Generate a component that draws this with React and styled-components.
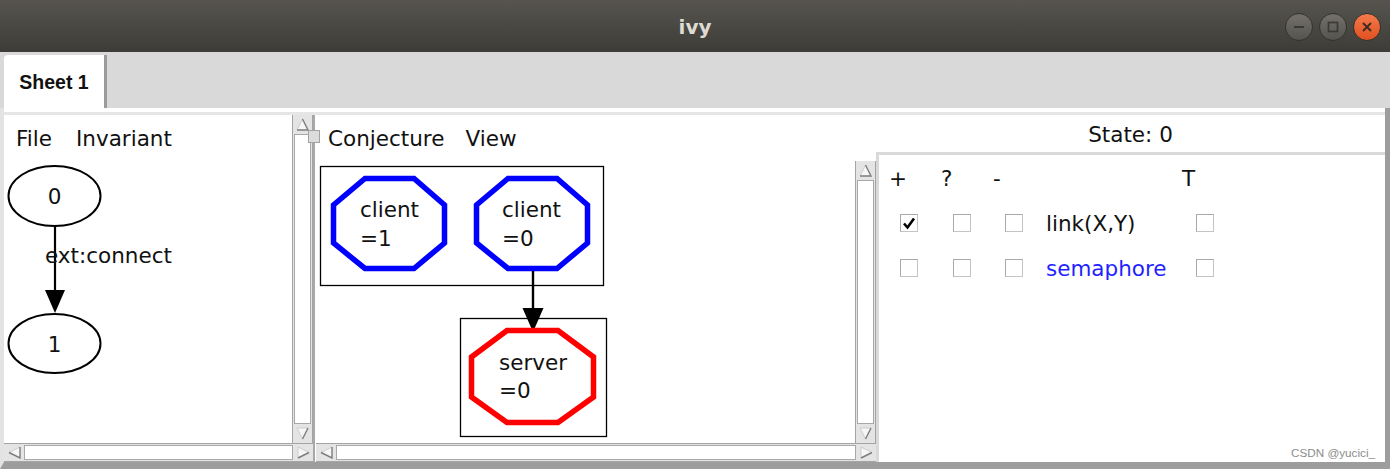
import React from "react";
import styled, { createGlobalStyle } from "styled-components";

const TK_FONT = `"DejaVu Sans", "Noto Sans", sans-serif`;

const GlobalStyle = createGlobalStyle`
  html, body {
    margin: 0;
    padding: 0;
    background: #fff;
  }
  body {
    font-family: ${TK_FONT};
  }
  * {
    box-sizing: border-box;
  }
`;

const Window = styled.div`
  width: 1390px;
  height: 469px;
  display: flex;
  flex-direction: column;
  overflow: hidden;
  background: #fff;
`;

const TitleBar = styled.div`
  height: 52px;
  flex: none;
  display: grid;
  grid-template-columns: 1fr auto 1fr;
  align-items: center;
  padding: 0 9px;
  background: linear-gradient(#57544e, #3d3c38);
`;

const Title = styled.div`
  grid-column: 2;
  font: bold 20px ${TK_FONT};
  color: #dfdbd2;
  margin-top: 1px;
`;

const WinButtons = styled.div`
  grid-column: 3;
  justify-self: end;
  display: flex;
  gap: 6px;
  margin-top: 2px;
`;

const WinButton = styled.div`
  width: 28px;
  height: 28px;
  border-radius: 50%;
  display: flex;
  align-items: center;
  justify-content: center;
  border: 1px solid #34332f;
  background: ${(p) =>
    p.$close
      ? "linear-gradient(#f47a4c, #e0501e)"
      : "linear-gradient(#74716b, #55534e)"};
`;

const TabBar = styled.div`
  height: 56px;
  flex: none;
  display: flex;
  align-items: flex-end;
  padding-left: 4px;
  background: #d9d9d9;
`;

const Tab = styled.div`
  width: 103px;
  height: 53px;
  display: flex;
  align-items: center;
  justify-content: center;
  padding-top: 1px;
  background: #fff;
  border-top-left-radius: 4px;
  border-right: 3px solid #9b9b9b;
  font: bold 19.5px "Liberation Sans", Arial, sans-serif;
  color: #111;
`;

const Frame = styled.div`
  flex: 1;
  display: flex;
  flex-direction: column;
  border-left: 4px solid #e3e3e3;
  border-right: 5px solid #9d9d9d;
  border-bottom: 7px solid #9d9d9d;
`;

const FrameTop = styled.div`
  height: 7px;
  flex: none;
  border-top: 4px solid #fff;
  background: #e6e6e6;
`;

const Panes = styled.div`
  flex: 1;
  display: flex;
  min-height: 0;
`;

const Pane = styled.div`
  width: ${(p) => (p.$width ? `${p.$width}px` : "auto")};
  flex: ${(p) => (p.$width ? "none" : "1")};
  display: flex;
  flex-direction: column;
  min-width: 0;
`;

const PaneBody = styled.div`
  flex: 1;
  display: flex;
  min-height: 0;
`;

const Canvas = styled.div`
  flex: 1;
  display: flex;
  flex-direction: column;
  min-width: 0;
  background: #fff;
`;

const Menu = styled.div`
  height: 46px;
  flex: none;
  display: flex;
  align-items: center;
  gap: ${(p) => p.$gap || 21}px;
  padding-left: 12px;
  font: 21.5px ${TK_FONT};
  color: #111;
`;

const Sash = styled.div`
  width: 3px;
  flex: none;
  position: relative;
  border-left: 2px solid #a8a8a8;
  background: #fff;
`;

const SashHandle = styled.div`
  position: absolute;
  top: 15px;
  left: -7px;
  width: 12px;
  height: 13px;
  background: #dcdcdc;
  border: 1px solid #a2a2a2;
  z-index: 1;
`;

/* scrollbars */

const VBar = styled.div`
  width: 21px;
  flex: none;
  display: flex;
  flex-direction: column;
  background: #e4e4e4;
  border-left: 1px solid #a4a4a4;
  border-right: 1px solid #a4a4a4;
`;

const HBar = styled.div`
  height: 19px;
  flex: none;
  display: flex;
  background: #e4e4e4;
  border-top: 1px solid #a4a4a4;
  border-bottom: 1px solid #a4a4a4;
`;

const ArrowCell = styled.div`
  flex: none;
  width: ${(p) => (p.$horizontal ? "20px" : "auto")};
  height: ${(p) => (p.$horizontal ? "auto" : "19px")};
  display: flex;
  align-items: center;
  justify-content: center;
`;

const Thumb = styled.div`
  flex: 1;
  background: #fff;
  border: 1px solid #a8a8a8;
  margin: ${(p) => (p.$horizontal ? "1px 0" : "0 1px")};
`;

const ARROWS = {
  up: { fill: "1,12 6.5,1 12,12", light: "1,12 6.5,1", dark: "6.5,1 12,12 1,12" },
  down: { fill: "1,1 12,1 6.5,12", light: "6.5,12 1,1 12,1", dark: "12,1 6.5,12" },
  left: { fill: "1,6.5 12,1 12,12", light: "1,6.5 12,1", dark: "12,1 12,12 1,6.5" },
  right: { fill: "1,1 12,6.5 1,12", light: "1,12 1,1 12,6.5", dark: "12,6.5 1,12" },
};

function Arrow({ dir }) {
  const a = ARROWS[dir];
  return (
    <svg width="13" height="13" viewBox="0 0 13 13">
      <polygon points={a.fill} fill="#f6f6f6" />
      <polyline points={a.light} fill="none" stroke="#cdcdcd" strokeWidth="1" />
      <polyline points={a.dark} fill="none" stroke="#7c7c7c" strokeWidth="1.4" />
    </svg>
  );
}

function VScroll() {
  return (
    <VBar>
      <ArrowCell>
        <Arrow dir="up" />
      </ArrowCell>
      <Thumb />
      <ArrowCell>
        <Arrow dir="down" />
      </ArrowCell>
    </VBar>
  );
}

function HScroll() {
  return (
    <HBar>
      <ArrowCell $horizontal>
        <Arrow dir="left" />
      </ArrowCell>
      <Thumb $horizontal />
      <ArrowCell $horizontal>
        <Arrow dir="right" />
      </ArrowCell>
    </HBar>
  );
}

/* graphs */

const GraphSvg = styled.svg`
  display: block;
  flex: none;
  font-family: ${TK_FONT};
  font-size: 21.5px;
`;

function InvariantGraph() {
  return (
    <GraphSvg width="288" height="282">
      <ellipse cx="50.5" cy="35" rx="46" ry="30" fill="none" stroke="#000" strokeWidth="2" />
      <text x="50.5" y="43" textAnchor="middle" fill="#111">0</text>
      <line x1="51" y1="65" x2="51" y2="131" stroke="#000" strokeWidth="2.2" />
      <polygon points="41,129 61,129 51,152" fill="#000" />
      <text x="41" y="102" fill="#111">ext:connect</text>
      <ellipse cx="50.5" cy="182.5" rx="46" ry="29.5" fill="none" stroke="#000" strokeWidth="2" />
      <text x="50.5" y="190.5" textAnchor="middle" fill="#111">1</text>
    </GraphSvg>
  );
}

function Octagon({ points, color }) {
  return <polygon points={points} fill="none" stroke={color} strokeWidth="5.5" />;
}

function ConjectureGraph() {
  return (
    <GraphSvg width="539" height="282">
      <rect x="4.5" y="5.5" width="283" height="119" fill="none" stroke="#000" strokeWidth="1.3" />
      <Octagon
        color="#0000ff"
        points="49,17.5 98,17.5 128.5,44 128.5,82 98,107.5 49,107.5 17.5,82 17.5,44"
      />
      <text x="44" y="56" fill="#111">client</text>
      <text x="44" y="85" fill="#111">=1</text>
      <Octagon
        color="#0000ff"
        points="192,17.5 241,17.5 271.5,44 271.5,82 241,107.5 192,107.5 160.5,82 160.5,44"
      />
      <text x="186" y="56" fill="#111">client</text>
      <text x="186" y="85" fill="#111">=0</text>
      <line x1="217" y1="110" x2="217" y2="149" stroke="#000" strokeWidth="2.4" />
      <polygon points="206.5,147 227.5,147 217,171" fill="#000" />
      <rect x="144.5" y="157.5" width="146" height="118" fill="none" stroke="#000" strokeWidth="1.3" />
      <Octagon
        color="#ff0000"
        points="191,169.5 242,169.5 277.5,196 277.5,236 242,261.5 191,261.5 155.5,236 155.5,196"
      />
      <text x="183" y="209" fill="#111">server</text>
      <text x="183" y="237" fill="#111">=0</text>
    </GraphSvg>
  );
}

/* state table */

const StateRow = styled.div`
  height: 37px;
  flex: none;
  display: flex;
  align-items: center;
  justify-content: center;
  padding-top: 1px;
  font: 21.5px ${TK_FONT};
  color: #111;
`;

const StateBox = styled.div`
  flex: 1;
  position: relative;
  border-top: 3px solid #d9d9d9;
  border-left: 3px solid #d9d9d9;
  background: #fff;
`;

const StateGrid = styled.div`
  display: grid;
  grid-template-columns: 52px 52px 53px 136px 60px;
  grid-auto-rows: 45px;
  align-items: center;
  padding: 1px 0 0 10px;
  font: 21.5px ${TK_FONT};
  color: #111;
`;

const Label = styled.span`
  color: ${(p) => (p.$link ? "#1f1fff" : "#111")};
  white-space: nowrap;
`;

const Box = styled.div`
  width: 18px;
  height: 18px;
  margin-left: ${(p) => p.$offset}px;
  margin-top: -2px;
  display: flex;
  align-items: center;
  justify-content: center;
  background: #fff;
  border: 1px solid #a9a9a9;
  border-right-color: #c4c4c4;
  border-bottom-color: #c4c4c4;
`;

const Watermark = styled.div`
  position: absolute;
  right: 10px;
  bottom: 3px;
  font: 11.7px "Liberation Sans", Arial, sans-serif;
  color: #8c8c8c;
`;

function Check({ checked, offset }) {
  return (
    <Box $offset={offset}>
      {checked && (
        <svg width="14" height="14" viewBox="0 0 14 14">
          <path d="M2 7.5 L5.5 11.5 L12 2.5" fill="none" stroke="#000" strokeWidth="2.6" />
        </svg>
      )}
    </Box>
  );
}

const OFFSETS = [11, 12, 12];

const ROWS = [
  { label: "link(X,Y)", checks: [true, false, false], t: false },
  { label: "semaphore", checks: [false, false, false], t: false, link: true },
];

function StateTable() {
  return (
    <StateGrid>
      <span>+</span>
      <span>?</span>
      <span>-</span>
      <span />
      <span>T</span>
      {ROWS.map((row) => (
        <React.Fragment key={row.label}>
          {row.checks.map((c, i) => (
            <Check key={i} checked={c} offset={OFFSETS[i]} />
          ))}
          <Label $link={row.link}>{row.label}</Label>
          <Check checked={row.t} offset={14} />
        </React.Fragment>
      ))}
    </StateGrid>
  );
}

function WindowControls() {
  return (
    <WinButtons>
      <WinButton>
        <svg width="12" height="12" viewBox="0 0 12 12">
          <line x1="1" y1="6" x2="11" y2="6" stroke="#3a3935" strokeWidth="2" />
        </svg>
      </WinButton>
      <WinButton>
        <svg width="12" height="12" viewBox="0 0 12 12">
          <rect x="1.5" y="1.5" width="9" height="9" fill="none" stroke="#3a3935" strokeWidth="1.7" />
        </svg>
      </WinButton>
      <WinButton $close>
        <svg width="12" height="12" viewBox="0 0 12 12">
          <path d="M2 2 L10 10 M10 2 L2 10" stroke="#3a2a22" strokeWidth="1.8" />
        </svg>
      </WinButton>
    </WinButtons>
  );
}

export default function App() {
  return (
    <>
      <GlobalStyle />
      <Window>
        <TitleBar>
          <Title>ivy</Title>
          <WindowControls />
        </TitleBar>
        <TabBar>
          <Tab>Sheet 1</Tab>
        </TabBar>
        <Frame>
          <FrameTop />
          <Panes>
            <Pane $width={309}>
              <PaneBody>
                <Canvas>
                  <Menu $gap={24}>
                    <span>File</span>
                    <span>Invariant</span>
                  </Menu>
                  <InvariantGraph />
                </Canvas>
                <VScroll />
              </PaneBody>
              <HScroll />
            </Pane>
            <Sash>
              <SashHandle />
            </Sash>
            <Pane $width={560}>
              <Menu>
                <span>Conjecture</span>
                <span>View</span>
              </Menu>
              <PaneBody>
                <Canvas>
                  <ConjectureGraph />
                </Canvas>
                <VScroll />
              </PaneBody>
              <HScroll />
            </Pane>
            <Pane>
              <StateRow>State: 0</StateRow>
              <StateBox>
                <StateTable />
                <Watermark>CSDN @yucici_</Watermark>
              </StateBox>
            </Pane>
          </Panes>
        </Frame>
      </Window>
    </>
  );
}
